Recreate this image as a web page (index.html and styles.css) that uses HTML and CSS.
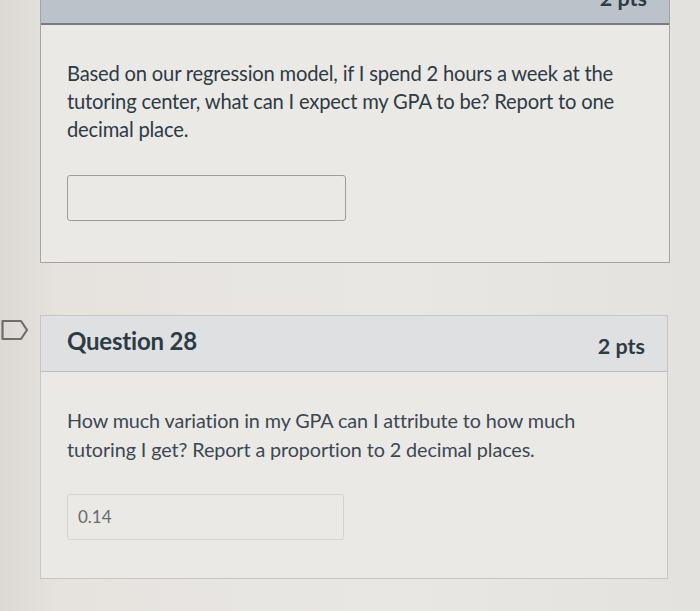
FILE: index.html
```html
<!DOCTYPE html>
<html>
<head>
<meta charset="utf-8">
<link rel="stylesheet" href="styles.css">
</head>
<body>
<div class="page">
  <section class="card card-prev">
    <div class="card-head head-prev">
      <span class="q-title"></span>
      <span class="pts">2 pts</span>
    </div>
    <div class="card-body body-prev">
      <p class="q-text">Based on our regression model, if I spend 2 hours a week at the tutoring center, what can I expect my GPA to be? Report to one decimal place.</p>
      <div class="answer answer-empty"></div>
    </div>
  </section>

  <div class="q-row">
    <svg class="flag" width="30" height="24" viewBox="0 0 30 24">
      <path d="M2.5 3 H21 L27 12 L21 21 H2.5 Z" fill="none" stroke="#6d6d6d" stroke-width="2.2" stroke-linejoin="round"/>
    </svg>
    <section class="card card-cur">
      <div class="card-head head-cur">
        <span class="q-title">Question 28</span>
        <span class="pts">2 pts</span>
      </div>
      <div class="card-body body-cur">
        <p class="q-text q-text-cur">How much variation in my GPA can I attribute to how much tutoring I get? Report a proportion to 2 decimal places.</p>
        <div class="answer answer-filled">0.14</div>
      </div>
    </section>
  </div>
</div>
</body>
</html>
```

FILE: styles.css
```css
html, body {
  margin: 0;
  padding: 0;
}
body {
  width: 700px;
  height: 611px;
  overflow: hidden;
  background: linear-gradient(90deg, #dcd8d3 0px, #e6e3df 60px, #e9e7e4 400px, #e4e2df 700px);
  font-family: Lato, "Open Sans", sans-serif;
  color: #2d3b45;
}
.page {
  margin-top: -31px;
  padding-left: 40px;
}
.card {
  width: 630px;
  box-sizing: border-box;
}
.card-prev {
  border: 1px solid #a4a4a4;
  border-top: none;
}
.card-head {
  height: 56px;
  box-sizing: border-box;
  display: flex;
  justify-content: space-between;
  align-items: center;
  padding: 0 22px 0 26px;
}
.head-prev {
  background: #bcc2ca;
  border-bottom: 2px solid #777c82;
}
.head-cur {
  background: #dfe0e1;
  border-bottom: 1px solid #bdbdbd;
}
.q-title {
  font-size: 24px;
  font-weight: 700;
  letter-spacing: -0.2px;
  margin-top: -6px;
}
.pts {
  font-size: 21.5px;
  font-weight: 700;
  color: #2d3b45;
  margin-top: 4px;
}
.card-body {
  background: #ebe9e6;
  padding-left: 26px;
  padding-right: 26px;
}
.body-prev {
  padding-top: 34px;
  padding-bottom: 41px;
}
.q-text {
  margin: 0;
  font-size: 20.2px;
  line-height: 28px;
  color: #2d3b45;
  letter-spacing: -0.2px;
  max-width: 570px;
}
.answer {
  width: 279px;
  height: 46px;
  box-sizing: border-box;
  border-radius: 3px;
}
.answer-empty {
  margin-top: 32px;
  border: 1.5px solid #9c9c9c;
  background: #ebe9e6;
}
.q-row {
  display: flex;
  align-items: flex-start;
  margin-top: 52px;
  margin-left: -40px;
}
.flag {
  width: 30px;
  height: 24px;
  margin-top: 3px;
  margin-right: 10px;
  flex: none;
}
.card-cur {
  border: 1px solid #c6c6c6;
  width: 628px;
}
.body-cur {
  padding-top: 34px;
  padding-bottom: 38px;
}
.q-text-cur {
  font-size: 19.8px;
  line-height: 29px;
  color: #3b4852;
  letter-spacing: -0.1px;
  max-width: 525px;
}
.answer-filled {
  margin-top: 30px;
  width: 277px;
  border: 1px solid #d5d3d0;
  background: #ebe9e6;
  font-size: 17px;
  color: #666a6e;
  padding: 12px 10px;
  line-height: 20px;
}
```
